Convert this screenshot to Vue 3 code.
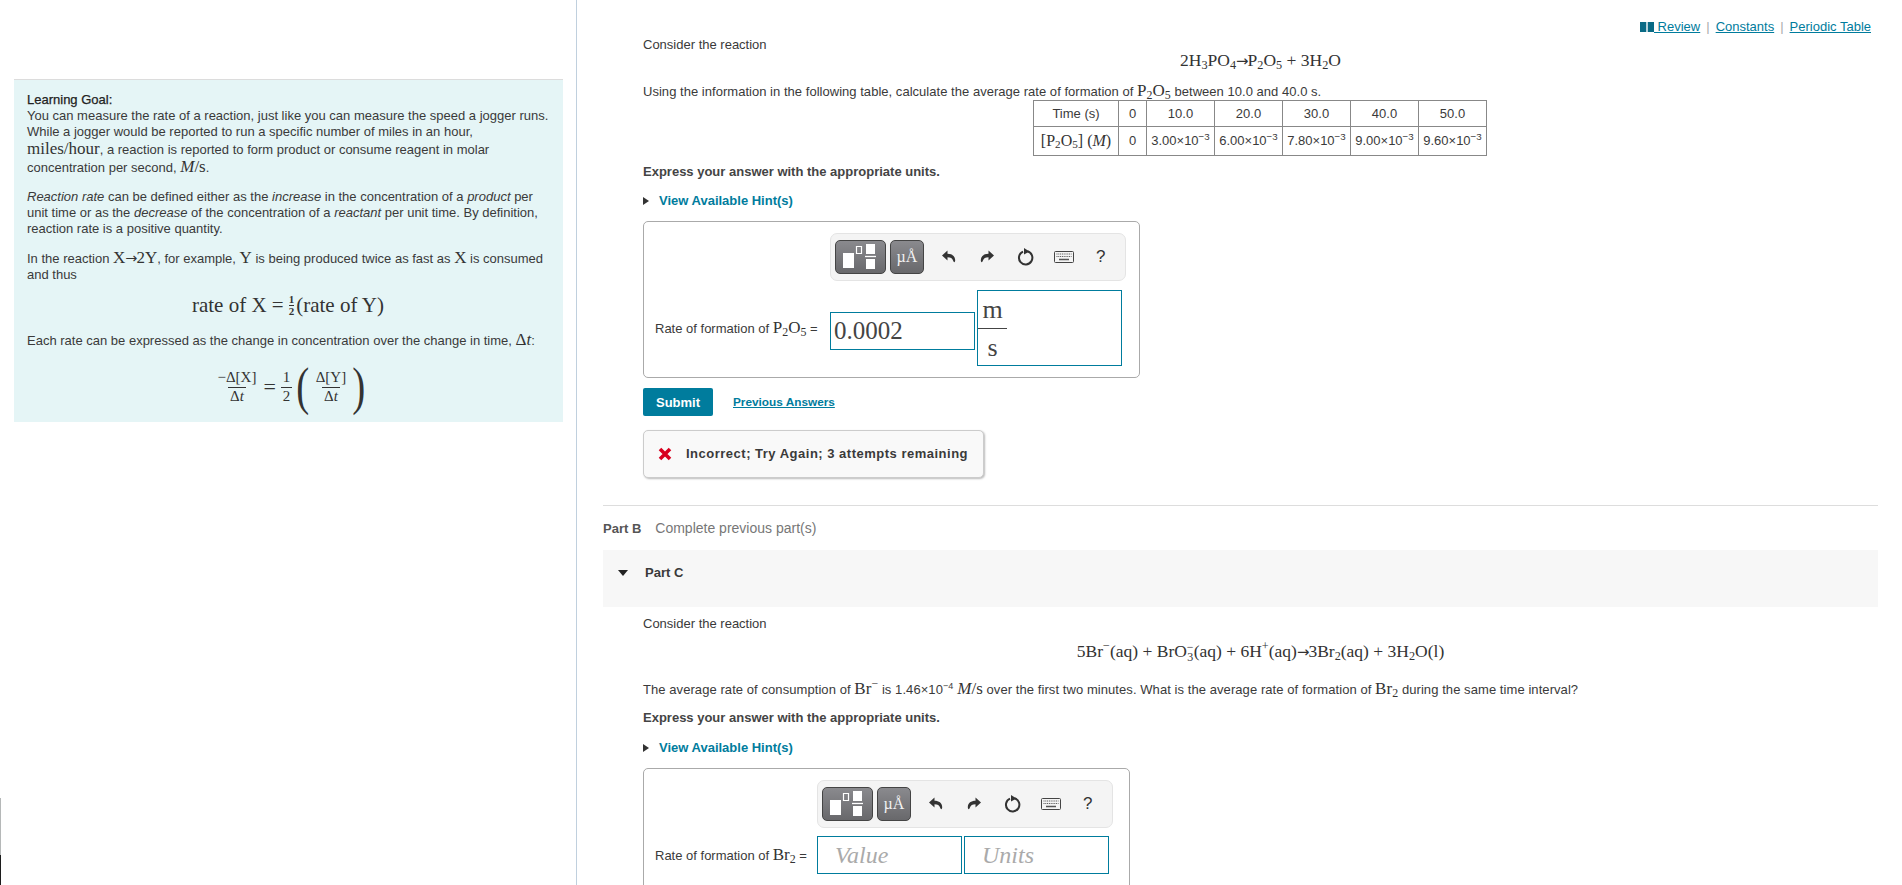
<script setup>
const times = ['10.0', '20.0', '30.0', '40.0', '50.0']
const concs = ['3.00', '6.00', '7.80', '9.00', '9.60']
</script>

<template>
  <div class="page">
    <span class="edge"></span>
    <aside class="side">
      <section class="goal">
        <p class="first"><span class="strongish">Learning Goal:</span><br />You can measure the rate of a reaction, just like you can measure the speed a jogger runs. While a jogger would be reported to run a specific number of miles in an hour, <span class="m">miles/hour</span>, a reaction is reported to form product or consume reagent in molar concentration per second, <span class="m"><i>M</i>/s</span>.</p>
        <p><i>Reaction rate</i> can be defined either as the <i>increase</i> in the concentration of a <i>product</i> per unit time or as the <i>decrease</i> of the concentration of a <i>reactant</i> per unit time. By definition, reaction rate is a positive quantity.</p>
        <p>In the reaction <span class="m">X<span class="ar">→</span>2Y</span>, for example, <span class="m">Y</span> is being produced twice as fast as <span class="m">X</span> is consumed and thus</p>
        <div class="display d1 m">rate of X = <span class="frac tiny"><span>1</span><span>2</span></span>(rate of Y)</div>
        <p>Each rate can be expressed as the change in concentration over the change in time, <span class="m">Δ<i>t</i></span>:</p>
        <div class="display d2 m">
          <span class="frac mid"><span>−Δ[X]</span><span>Δ<i>t</i></span></span>
          <span class="eq">=</span>
          <span class="frac mid half"><span>1</span><span>2</span></span>
          <span class="paren">(</span>
          <span class="frac mid"><span>Δ[Y]</span><span>Δ<i>t</i></span></span>
          <span class="paren">)</span>
        </div>
      </section>
    </aside>

    <main class="main">
      <nav class="links">
        <svg class="book" width="14" height="10" viewBox="0 0 14 10"><path d="M0 0h6.300v10H0zM7.700 0H14v10H7.700z" fill="#0a6a85" /></svg>
        <a>&nbsp;Review</a><span class="sep">|</span><a>Constants</a><span class="sep">|</span><a>Periodic Table</a>
      </nav>

      <div class="part">
        <p class="consider">Consider the reaction</p>
        <div class="eqn e1 m">2H<sub>3</sub>PO<sub>4</sub><span class="ar">→</span>P<sub>2</sub>O<sub>5</sub> + 3H<sub>2</sub>O</div>
        <p class="using">Using the information in the following table, calculate the average rate of formation of <span class="m">P<sub>2</sub>O<sub>5</sub></span> between 10.0 and 40.0 s.</p>
        <table class="data">
          <tbody>
            <tr class="r1">
              <td class="head">Time (s)</td>
              <td class="zero">0</td>
              <td v-for="t in times" :key="t">{{ t }}</td>
            </tr>
            <tr class="r2">
              <td class="head m">[P<sub>2</sub>O<sub>5</sub>] (<i>M</i>)</td>
              <td class="zero">0</td>
              <td v-for="c in concs" :key="c" class="sci">{{ c }}×10<sup>−3</sup></td>
            </tr>
          </tbody>
        </table>
        <p class="express e-a">Express your answer with the appropriate units.</p>
        <a class="hint h-a"><span class="tri"></span>View Available Hint(s)</a>

        <div class="answer a-a">
          <div class="toolbar t-a">
            <button class="tbtn tpl" aria-label="Templates">
              <svg width="36" height="26" viewBox="0 0 36 26">
                <path d="M0 9h11v15H0z" fill="#fff" />
                <path d="M13.500 2.500h5v7h-5z" fill="none" stroke="#fff" stroke-width="1.200" />
                <path d="M23 0h9v10h-9zM23 15h9v10h-9z" fill="#fff" />
                <path d="M22 12.500h11" stroke="#fff" stroke-width="1.300" />
              </svg>
            </button>
            <button class="tbtn mu">µÅ</button>
            <svg class="ti" width="16" height="16" viewBox="0 0 16 16"><path d="M6.500 1.500 1 6.500l5.500 5V8.300c3 0 5 .9 6 4.200.9 1.500 1.700.5 1.700-1.500C14 7 11 4.800 6.500 4.800z" fill="#333" /></svg>
            <svg class="ti" width="16" height="16" viewBox="0 0 16 16"><path d="M9.500 1.500 15 6.500l-5.500 5V8.300c-3 0-5 .9-6 4.200C2.600 14 1.800 13 1.800 11 2 7 5 4.800 9.500 4.800z" fill="#333" /></svg>
            <svg class="ti" width="18" height="18" viewBox="0 0 18 18"><path d="M10.500 3.300a6.700 6.700 0 1 1-4.500.3" fill="none" stroke="#333" stroke-width="2" /><path d="M7 0l5.500 3.500L7 6.500z" fill="#333" /></svg>
            <svg class="ti kb" width="20" height="12" viewBox="0 0 20 12"><rect x=".5" y=".5" width="19" height="11" rx="1" fill="#f4f4f4" stroke="#444" /><path d="M2.500 3h15M2.500 5.500h15" stroke="#555" stroke-dasharray="1 .8" /><path d="M5 8.500h10" stroke="#555" stroke-width="1.500" /></svg>
            <span class="q">?</span>
          </div>
          <div class="row r-a">
            <span class="lbl">Rate of formation of <span class="m">P<sub>2</sub>O<sub>5</sub></span> =</span>
            <div class="field val">0.0002</div>
            <div class="field units">
              <span class="unitfrac"><span>m</span><span>s</span></span>
            </div>
          </div>
        </div>

        <div class="actions">
          <button class="submit">Submit</button>
          <a class="prev">Previous Answers</a>
        </div>
        <div class="feedback">
          <svg width="14" height="14" viewBox="0 0 14 14"><path d="M2 2l10 10M12 2 2 12" stroke="#d8001f" stroke-width="3.600" /></svg>
          <span>Incorrect; Try Again; 3 attempts remaining</span>
        </div>
      </div>

      <hr class="rule" />
      <div class="partb"><b>Part B</b><span>Complete previous part(s)</span></div>
      <div class="partc"><span class="down"></span><b>Part C</b></div>

      <div class="part">
        <p class="consider c2">Consider the reaction</p>
        <div class="eqn e2 m">5Br<sup>−</sup>(aq) + BrO<span class="stack"><sup>−</sup><sub>3</sub></span>(aq) + 6H<sup>+</sup>(aq)<span class="ar">→</span>3Br<sub>2</sub>(aq) + 3H<sub>2</sub>O(l)</div>
        <p class="using u2">The average rate of consumption of <span class="m">Br<sup>−</sup></span> is 1.46×10<sup>−4</sup> <span class="m"><i>M</i>/s</span> over the first two minutes. What is the average rate of formation of <span class="m">Br<sub>2</sub></span> during the same time interval?</p>
        <p class="express e-c">Express your answer with the appropriate units.</p>
        <a class="hint h-c"><span class="tri"></span>View Available Hint(s)</a>

        <div class="answer a-c">
          <div class="toolbar t-c">
            <button class="tbtn tpl" aria-label="Templates">
              <svg width="36" height="26" viewBox="0 0 36 26">
                <path d="M0 9h11v15H0z" fill="#fff" />
                <path d="M13.500 2.500h5v7h-5z" fill="none" stroke="#fff" stroke-width="1.200" />
                <path d="M23 0h9v10h-9zM23 15h9v10h-9z" fill="#fff" />
                <path d="M22 12.500h11" stroke="#fff" stroke-width="1.300" />
              </svg>
            </button>
            <button class="tbtn mu">µÅ</button>
            <svg class="ti" width="16" height="16" viewBox="0 0 16 16"><path d="M6.500 1.500 1 6.500l5.500 5V8.300c3 0 5 .9 6 4.200.9 1.500 1.700.5 1.700-1.500C14 7 11 4.800 6.500 4.800z" fill="#333" /></svg>
            <svg class="ti" width="16" height="16" viewBox="0 0 16 16"><path d="M9.500 1.500 15 6.500l-5.500 5V8.300c-3 0-5 .9-6 4.200C2.600 14 1.800 13 1.800 11 2 7 5 4.800 9.500 4.800z" fill="#333" /></svg>
            <svg class="ti" width="18" height="18" viewBox="0 0 18 18"><path d="M10.500 3.300a6.700 6.700 0 1 1-4.500.3" fill="none" stroke="#333" stroke-width="2" /><path d="M7 0l5.500 3.500L7 6.500z" fill="#333" /></svg>
            <svg class="ti kb" width="20" height="12" viewBox="0 0 20 12"><rect x=".5" y=".5" width="19" height="11" rx="1" fill="#f4f4f4" stroke="#444" /><path d="M2.500 3h15M2.500 5.500h15" stroke="#555" stroke-dasharray="1 .8" /><path d="M5 8.500h10" stroke="#555" stroke-width="1.500" /></svg>
            <span class="q">?</span>
          </div>
          <div class="row r-c">
            <span class="lbl">Rate of formation of <span class="m">Br<sub>2</sub></span> =</span>
            <div class="field ph">Value</div>
            <div class="field ph">Units</div>
          </div>
        </div>
      </div>
    </main>
  </div>
</template>

<style>
html, body { margin: 0; overflow: hidden; background: #fff; }
</style>

<style scoped>
.page {
  display: grid;
  grid-template-columns: 577px 1fr;
  height: 885px;
  overflow: hidden;
  position: relative;
  font: 13px/16px "Liberation Sans", Arial, sans-serif;
  color: #3a3a3a;
  background: #fff;
}
.edge { position: absolute; left: 0; top: 798px; bottom: 0; width: 1px; background: linear-gradient(#b5b8b8 0 57px, #1c1c1c 57px); }
p { margin: 0; }
a { color: #007c9d; }
i { font-style: italic; }
sub, sup { font-size: 70%; line-height: 0; }
sub { vertical-align: -.22em; }
.m { font-family: "Liberation Serif", "Times New Roman", serif; font-size: 17px; color: #333; }
.ar { font-family: "DejaVu Sans", sans-serif; font-size: .85em; letter-spacing: -1px; }
.side { border-right: 1px solid #c0d0de; padding: 79px 13px 0 14px; box-sizing: border-box; }
.goal {
  background: #e5f5f6;
  border-top: 1px solid #dcdcdc;
  height: 343px;
  box-sizing: border-box;
  padding: 12px 14px 0 13px;
}
.goal p { margin-bottom: 13px; }
.goal .m { line-height: 16px; }
.goal .first { margin-bottom: 13px; }
.goal .first .m { line-height: 18px; }
.strongish { color: #222; -webkit-text-stroke: .25px #222; }
.display { display: flex; align-items: center; justify-content: center; }
.goal .d1 { font-size: 21px; margin: -6px 0 12px; height: 30px; line-height: 30px; }
.goal .d2 { font-size: 15px; height: 50px; gap: 5px; margin-left: 4px; }
.frac { display: inline-flex; flex-direction: column; align-items: center; vertical-align: middle; line-height: 1; }
.frac > span + span { border-top: 1px solid #333; }
.tiny { font-size: 11px; margin: 0 2px 0 5px; font-weight: 700; }
.mid > span { padding: 1px 2px 2px; }
.half { font-weight: 400; }
.eq { font-size: 22px; }
.paren { font-size: 52px; font-weight: 100; line-height: 50px; margin: 0 -3px; transform: scaleX(.75); }

.main { padding: 0 24px 0 26px; min-width: 0; }
.links { display: flex; justify-content: flex-end; align-items: center; height: 54px; padding-right: 7px; box-sizing: border-box; }
.links a { text-decoration: underline; }
.sep { color: #aaa; margin: 0 6px; }
.part { padding-left: 40px; }
.consider { margin-top: -17px; line-height: 16px; }
.eqn { text-align: center; font-size: 17.500px; }
.e1 { margin-top: -5px; line-height: 24px; }
.using { margin-top: 8px; line-height: 19px; letter-spacing: .03px; }
.data { border-collapse: collapse; margin: -1px 0 0 390px; table-layout: fixed; width: 454px; }
.data td { border: 1px solid #888; padding: 0; text-align: center; }
.r1 td { height: 25px; }
.r2 td { height: 28px; }
.data .head { width: 84px; }
.data .zero { width: 27px; }
.data .head.m { font-size: 16px; white-space: nowrap; }
.data .sci { white-space: nowrap; }
.data .sci sup { font-size: 75%; }
.express { font-weight: 700; color: #444; }
.e-a { margin-top: 8px; }
.hint { display: flex; align-items: center; font-weight: 700; }
.h-a { margin-top: 13px; }
.tri { width: 0; height: 0; border-left: 6px solid #333; border-top: 4px solid transparent; border-bottom: 4px solid transparent; margin-right: 10px; }
.answer { border: 1px solid #aaa; border-radius: 5px; box-sizing: border-box; position: relative; }
.a-a { width: 497px; height: 157px; margin-top: 12px; padding: 11px 14px 0 11px; }
.a-c { width: 487px; height: 130px; margin-top: 12px; padding: 11px 14px 0 11px; }
.toolbar { display: flex; align-items: center; background: #f4f4f4; border: 1px solid #e4e4e4; border-radius: 7px; height: 48px; box-sizing: border-box; padding-left: 4px; }
.t-a { width: 296px; margin-left: 175px; }
.t-c { width: 296px; margin-left: 162px; }
.tbtn { height: 34px; padding: 0; border: 1px solid #444; border-radius: 5px; background: linear-gradient(#8a8a8e, #68686b); color: #fff; display: flex; align-items: center; justify-content: center; box-sizing: border-box; }
.tpl { width: 51px; }
.mu { width: 34px; margin-left: 4px; font: 16px "Liberation Serif", serif; color: #f2f2f2; }
.ti { margin-left: 22px; flex: none; }
.tbtn + .ti { margin-left: 17px; }
.kb { margin-left: 19px; }
.q { font-size: 17px; margin-left: 22px; color: #333; }
.row { display: flex; align-items: center; }
.lbl { white-space: nowrap; }
.r-a { margin-top: 9px; }
.r-a .lbl { width: 175px; }
.r-c { margin-top: 8px; }
.r-c .lbl { width: 162px; }
.field { width: 145px; border: 1px solid #007c9d; box-sizing: border-box; height: 38px; font: 25px/36px "Liberation Serif", serif; padding-left: 3px; color: #444; flex: none; }
.val { margin: 5px 2px 0 0; }
.units { height: 76px; padding: 0; }
.unitfrac { display: inline-flex; flex-direction: column; width: 29px; text-align: center; font-size: 26px; line-height: 37px; }
.unitfrac span + span { border-top: 1px solid #444; }
.ph { color: #aaa; font-style: italic; font-size: 24px; padding-left: 17px; margin-right: 2px; }
.actions { display: flex; align-items: center; gap: 20px; margin-top: 10px; }
.submit { width: 70px; height: 28px; background: #007c9d; color: #fff; border: 0; border-radius: 2px; font: 700 13px "Liberation Sans", sans-serif; padding: 0; }
.prev { text-decoration: underline; font-size: 11.800px; font-weight: 700; }
.feedback { display: flex; align-items: center; gap: 14px; width: 341px; height: 48px; box-sizing: border-box; margin-top: 14px; padding-left: 14px; background: #f9f9f9; border: 1px solid #ccc; border-radius: 5px; box-shadow: 1px 1px 2px #bbb; font-weight: 700; letter-spacing: .5px; white-space: nowrap; }
.rule { border: 0; border-top: 1px solid #ddd; margin: 27px 0 0; }
.partb { margin-top: 14px; display: flex; gap: 14px; align-items: baseline; color: #777; line-height: 16px; }
.partb span { font-size: 14px; }
.partb b { color: #555; }
.partc { margin-top: 13px; height: 57px; background: #f7f7f7; display: flex; align-items: flex-start; padding: 15px 0 0 15px; box-sizing: border-box; }
.down { width: 0; height: 0; border-top: 6px solid #222; border-left: 5px solid transparent; border-right: 5px solid transparent; margin: 5px 17px 0 0; }
.c2 { margin-top: 9px; }
.e2 { margin-top: 7px; line-height: 24px; }
.stack { display: inline-flex; flex-direction: column; vertical-align: middle; line-height: .7; font-size: 12px; }
.stack sub, .stack sup { line-height: .8; font-size: 100%; vertical-align: baseline; }
.u2 { margin-top: 15px; white-space: nowrap; letter-spacing: .07px; }
.e-c { margin-top: 11px; }
.h-c { margin-top: 14px; }
</style>
